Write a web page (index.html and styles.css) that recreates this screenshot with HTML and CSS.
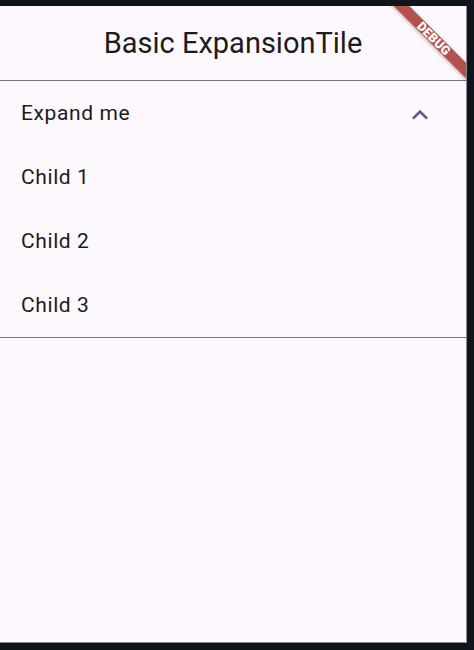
FILE: index.html
```html
<!DOCTYPE html>
<html lang="en">
<head>
<meta charset="utf-8">
<title>Basic ExpansionTile</title>
<link rel="stylesheet" href="styles.css">
</head>
<body>
<div class="app">
  <header class="appbar">
    <h1 class="title">Basic ExpansionTile</h1>
  </header>
  <section class="expansion">
    <div class="tile tile-header">
      <span class="tile-text">Expand me</span>
      <svg class="chevron" viewBox="0 0 24 24" width="32" height="32" aria-hidden="true">
        <path d="M12 8l-6 6 1.41 1.41L12 10.83l4.59 4.58L18 14z"/>
      </svg>
    </div>
    <div class="tile"><span class="tile-text">Child 1</span></div>
    <div class="tile"><span class="tile-text">Child 2</span></div>
    <div class="tile"><span class="tile-text">Child 3</span></div>
  </section>
  <div class="debug-banner">DEBUG</div>
</div>
</body>
</html>
```
FILE: styles.css
```css
html, body {
  margin: 0;
  padding: 0;
}
body {
  background: #10151b;
  width: 474px;
  height: 650px;
  overflow: hidden;
  font-family: Roboto, "Liberation Sans", sans-serif;
}
.app {
  position: relative;
  margin-top: 6px;
  width: 466px;
  height: 636px;
  background: #fdf8fd;
  border-right: 1px solid #8e8b92;
  border-bottom: 1px solid #8e8b92;
  overflow: hidden;
  display: flex;
  flex-direction: column;
}
.appbar {
  height: 74px;
  display: flex;
  align-items: center;
  justify-content: center;
  border-bottom: 1px solid #79747e;
  flex-shrink: 0;
}
.title {
  margin: 0;
  font-weight: 400;
  font-size: 29px;
  color: #1d1b20;
  letter-spacing: 0;
  line-height: 1;
}
.expansion {
  border-bottom: 1px solid #79747e;
}
.tile {
  height: 64px;
  display: flex;
  align-items: center;
  padding-left: 21px;
}
.tile-text {
  font-size: 21px;
  letter-spacing: 0.6px;
  color: #1d1b20;
  flex: 1;
}
.chevron {
  fill: #65558f;
  margin-right: 30px;
  margin-top: 4px;
  flex-shrink: 0;
}
.debug-banner {
  position: absolute;
  left: 374px;
  top: 27px;
  width: 120px;
  height: 11px;
  transform: rotate(45deg);
  background: #b4514f;
  box-shadow: 0 1px 4px rgba(0, 0, 0, 0.3);
  color: #ffffff;
  font-family: Roboto, "Liberation Sans", sans-serif;
  font-weight: 900;
  font-size: 12.5px;
  line-height: 11px;
  text-align: center;
  letter-spacing: 0.3px;
}
```
